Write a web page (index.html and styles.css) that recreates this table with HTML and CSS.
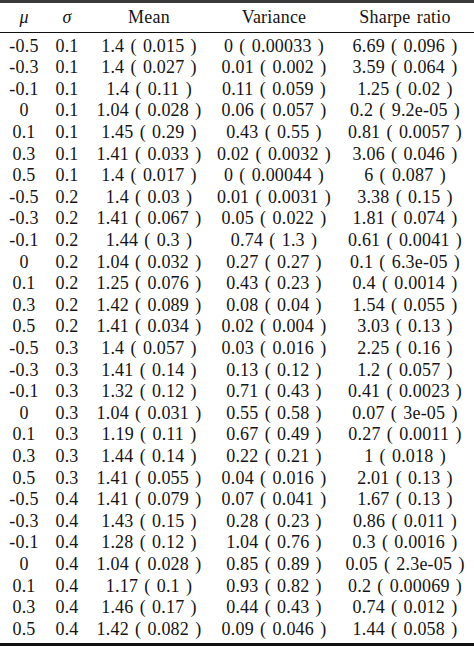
FILE: index.html
```html
<!DOCTYPE html>
<html>
<head>
<meta charset="utf-8">
<link rel="stylesheet" href="styles.css">
</head>
<body>
<div class="table">
  <div class="rule-top"></div>
  <div class="row head">
    <span class="it">μ</span><span class="it">σ</span><span>Mean</span><span>Variance</span><span>Sharpe ratio</span>
  </div>
  <div class="rule-mid"></div>
  <div class="body" id="body">
    <div class="row"><span>-0.5</span><span>0.1</span><span>1.4 ( 0.015 )</span><span>0 ( 0.00033 )</span><span>6.69 ( 0.096 )</span></div>
    <div class="row"><span>-0.3</span><span>0.1</span><span>1.4 ( 0.027 )</span><span>0.01 ( 0.002 )</span><span>3.59 ( 0.064 )</span></div>
    <div class="row"><span>-0.1</span><span>0.1</span><span>1.4 ( 0.11 )</span><span>0.11 ( 0.059 )</span><span>1.25 ( 0.02 )</span></div>
    <div class="row"><span>0</span><span>0.1</span><span>1.04 ( 0.028 )</span><span>0.06 ( 0.057 )</span><span>0.2 ( 9.2e-05 )</span></div>
    <div class="row"><span>0.1</span><span>0.1</span><span>1.45 ( 0.29 )</span><span>0.43 ( 0.55 )</span><span>0.81 ( 0.0057 )</span></div>
    <div class="row"><span>0.3</span><span>0.1</span><span>1.41 ( 0.033 )</span><span>0.02 ( 0.0032 )</span><span>3.06 ( 0.046 )</span></div>
    <div class="row"><span>0.5</span><span>0.1</span><span>1.4 ( 0.017 )</span><span>0 ( 0.00044 )</span><span>6 ( 0.087 )</span></div>
    <div class="row"><span>-0.5</span><span>0.2</span><span>1.4 ( 0.03 )</span><span>0.01 ( 0.0031 )</span><span>3.38 ( 0.15 )</span></div>
    <div class="row"><span>-0.3</span><span>0.2</span><span>1.41 ( 0.067 )</span><span>0.05 ( 0.022 )</span><span>1.81 ( 0.074 )</span></div>
    <div class="row"><span>-0.1</span><span>0.2</span><span>1.44 ( 0.3 )</span><span>0.74 ( 1.3 )</span><span>0.61 ( 0.0041 )</span></div>
    <div class="row"><span>0</span><span>0.2</span><span>1.04 ( 0.032 )</span><span>0.27 ( 0.27 )</span><span>0.1 ( 6.3e-05 )</span></div>
    <div class="row"><span>0.1</span><span>0.2</span><span>1.25 ( 0.076 )</span><span>0.43 ( 0.23 )</span><span>0.4 ( 0.0014 )</span></div>
    <div class="row"><span>0.3</span><span>0.2</span><span>1.42 ( 0.089 )</span><span>0.08 ( 0.04 )</span><span>1.54 ( 0.055 )</span></div>
    <div class="row"><span>0.5</span><span>0.2</span><span>1.41 ( 0.034 )</span><span>0.02 ( 0.004 )</span><span>3.03 ( 0.13 )</span></div>
    <div class="row"><span>-0.5</span><span>0.3</span><span>1.4 ( 0.057 )</span><span>0.03 ( 0.016 )</span><span>2.25 ( 0.16 )</span></div>
    <div class="row"><span>-0.3</span><span>0.3</span><span>1.41 ( 0.14 )</span><span>0.13 ( 0.12 )</span><span>1.2 ( 0.057 )</span></div>
    <div class="row"><span>-0.1</span><span>0.3</span><span>1.32 ( 0.12 )</span><span>0.71 ( 0.43 )</span><span>0.41 ( 0.0023 )</span></div>
    <div class="row"><span>0</span><span>0.3</span><span>1.04 ( 0.031 )</span><span>0.55 ( 0.58 )</span><span>0.07 ( 3e-05 )</span></div>
    <div class="row"><span>0.1</span><span>0.3</span><span>1.19 ( 0.11 )</span><span>0.67 ( 0.49 )</span><span>0.27 ( 0.0011 )</span></div>
    <div class="row"><span>0.3</span><span>0.3</span><span>1.44 ( 0.14 )</span><span>0.22 ( 0.21 )</span><span>1 ( 0.018 )</span></div>
    <div class="row"><span>0.5</span><span>0.3</span><span>1.41 ( 0.055 )</span><span>0.04 ( 0.016 )</span><span>2.01 ( 0.13 )</span></div>
    <div class="row"><span>-0.5</span><span>0.4</span><span>1.41 ( 0.079 )</span><span>0.07 ( 0.041 )</span><span>1.67 ( 0.13 )</span></div>
    <div class="row"><span>-0.3</span><span>0.4</span><span>1.43 ( 0.15 )</span><span>0.28 ( 0.23 )</span><span>0.86 ( 0.011 )</span></div>
    <div class="row"><span>-0.1</span><span>0.4</span><span>1.28 ( 0.12 )</span><span>1.04 ( 0.76 )</span><span>0.3 ( 0.0016 )</span></div>
    <div class="row"><span>0</span><span>0.4</span><span>1.04 ( 0.028 )</span><span>0.85 ( 0.89 )</span><span>0.05 ( 2.3e-05 )</span></div>
    <div class="row"><span>0.1</span><span>0.4</span><span>1.17 ( 0.1 )</span><span>0.93 ( 0.82 )</span><span>0.2 ( 0.00069 )</span></div>
    <div class="row"><span>0.3</span><span>0.4</span><span>1.46 ( 0.17 )</span><span>0.44 ( 0.43 )</span><span>0.74 ( 0.012 )</span></div>
    <div class="row"><span>0.5</span><span>0.4</span><span>1.42 ( 0.082 )</span><span>0.09 ( 0.046 )</span><span>1.44 ( 0.058 )</span></div>
  </div>
  <div class="rule-bot"></div>
</div>
</body>
</html>
```
FILE: styles.css
```css
html, body {
  margin: 0;
  padding: 0;
  background: #fff;
}
body {
  width: 474px;
  height: 647px;
  overflow: hidden;
  font-family: "Liberation Serif", "DejaVu Serif", serif;
  font-size: 18px;
  color: #141414;
  letter-spacing: 0.2px;
  word-spacing: 1.5px;
}
.table {
  display: flex;
  flex-direction: column;
}
.rule-top {
  height: 3px;
  background: #3a3a3a;
}
.rule-mid {
  height: 1.5px;
  background: #111;
}
.rule-bot {
  height: 3px;
  background: #111;
}
.row {
  display: grid;
  grid-template-columns: 48px 38px 126px 124px 138px;
  height: 21.6px;
  align-items: center;
  white-space: nowrap;
}
.row span {
  text-align: center;
  line-height: 21.6px;
}
.head {
  height: 28.5px;
}
.head span {
  line-height: 28.5px;
}
.it {
  font-style: italic;
}
.body {
  display: flex;
  flex-direction: column;
  padding: 2.7px 0 2.7px;
}
```
